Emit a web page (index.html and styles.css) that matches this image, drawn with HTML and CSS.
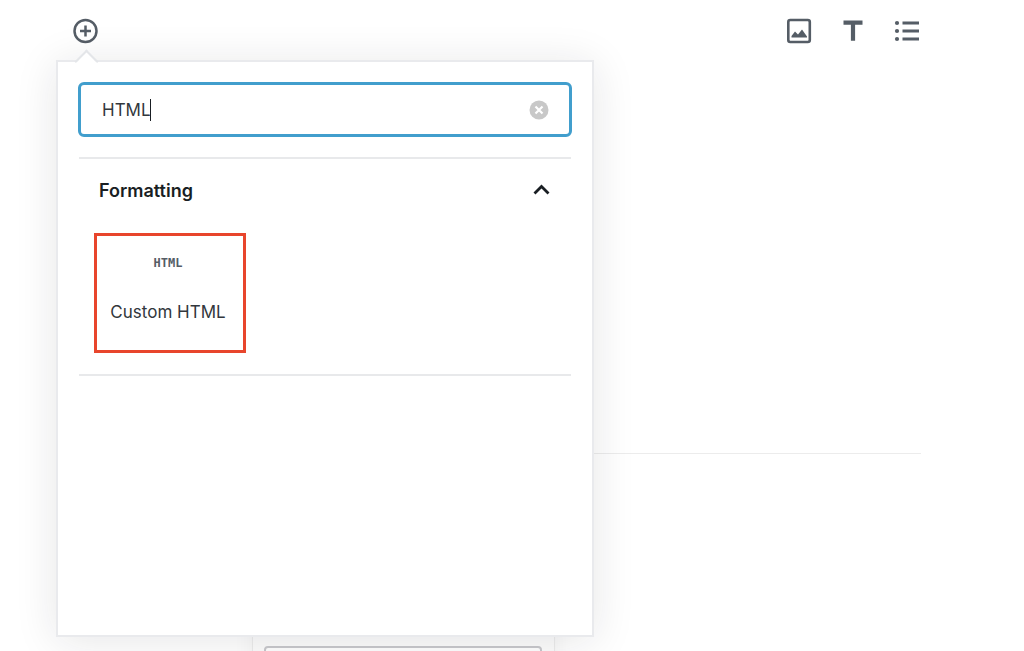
FILE: index.html
```
<!DOCTYPE html>
<html lang="en">
<head>
  <meta charset="UTF-8">
  <title>Add Block</title>
  <link rel="stylesheet" href="styles.css">
</head>
<body>
  <div class="editor">
    <div class="toolbar">
      <div class="inserter">
        <button type="button" class="icon-btn" aria-label="Add block" aria-expanded="true">
          <svg width="26" height="26" viewBox="0 0 26 26" fill="none" stroke="#555d66" stroke-width="2.5">
            <circle cx="13.5" cy="13" r="11"/>
            <path d="M13.5 7.5v11M8 13h11"/>
          </svg>
        </button>

        <div class="popover">
          <div class="search">
            <input type="text" class="search-input" value="HTML" aria-label="Search for a block">
            <span class="caret"></span>
            <button type="button" class="clear" aria-label="Clear search">
              <svg width="20" height="20" viewBox="0 0 20 20">
                <circle cx="10" cy="10" r="9.5" fill="#c8c8c8"/>
                <path d="M6.5 6.5l7 7M13.5 6.5l-7 7" stroke="#fff" stroke-width="2.2"/>
              </svg>
            </button>
          </div>

          <div class="panel">
            <button type="button" class="panel-title" aria-expanded="true">
              Formatting
              <svg width="18" height="12" viewBox="0 0 18 12" fill="none" stroke="#191e23" stroke-width="2.8">
                <path d="M1.5 9.5l7-7 7 7"/>
              </svg>
            </button>
            <ul class="blocks">
              <li>
                <button type="button" class="block">
                  <span class="block-icon">HTML</span>
                  <span class="block-name">Custom HTML</span>
                </button>
              </li>
            </ul>
          </div>
        </div>
      </div>

      <div class="shortcuts">
        <button type="button" class="icon-btn" aria-label="Image">
          <svg width="26" height="26" viewBox="0 0 26 26">
            <rect x="2.3" y="2" width="21.5" height="22" rx="2" fill="none" stroke="#555d66" stroke-width="2.6"/>
            <path d="M5.5 19.5v-1.5l3.5-4.5 3 3 4-5 5 7v1z" fill="#555d66"/>
          </svg>
        </button>
        <button type="button" class="icon-btn" aria-label="Heading">
          <svg width="26" height="26" viewBox="0 0 26 26">
            <path d="M3.5 2.5h19v4.2h-7.4v16h-4.2v-16H3.5z" fill="#555d66"/>
          </svg>
        </button>
        <button type="button" class="icon-btn" aria-label="List">
          <svg width="26" height="26" viewBox="0 0 26 26" fill="#555d66">
            <circle cx="3" cy="5" r="2.1"/>
            <circle cx="3" cy="13" r="2.1"/>
            <circle cx="3" cy="21" r="2.1"/>
            <path d="M8.5 3.6H25v2.8H8.5zM8.5 11.6H25v2.8H8.5zM8.5 19.6H25v2.8H8.5z"/>
          </svg>
        </button>
      </div>
    </div>

    <div class="content"></div>

    <div class="metabox">
      <input type="text" class="metabox-input" aria-label="Value">
    </div>
  </div>
</body>
</html>
```
FILE: styles.css
```
* {
  box-sizing: border-box;
}
body, ul, li {
  list-style: none;
  margin: 0;
  padding: 0;
}
body {
  background-color: #fff;
  font-family: Inter, "Open Sans", sans-serif;
  font-size: 17px;
  color: #32373c;
}
button, input {
  font: inherit;
  color: inherit;
}
button {
  margin: 0;
  padding: 0;
  border: 0;
  background: none;
  cursor: pointer;
}
svg {
  display: block;
}

.editor {
  display: flex;
  flex-direction: column;
  height: 100vh;
  padding: 0 103px 0 56px;
  overflow: hidden;
}

.toolbar {
  display: flex;
  justify-content: space-between;
  height: 62px;
  flex: none;
}
.inserter {
  position: relative;
  display: flex;
  align-items: center;
  padding: 0 16px;
}
.shortcuts {
  display: flex;
  align-items: center;
  gap: 28px;
  padding-right: 1px;
}

.popover {
  position: absolute;
  z-index: 10;
  top: 60px;
  left: 0;
  width: 538px;
  height: 577px;
  padding: 20px;
  border: 2px solid #e9eaed;
  background-color: #fff;
  box-shadow: 0 4px 40px rgba(25, 30, 35, .11);
}
.popover::before {
  content: "";
  position: absolute;
  top: -9px;
  left: 20px;
  width: 15px;
  height: 15px;
  border: 2px solid #e4e6e9;
  border-right: 0;
  border-bottom: 0;
  background: linear-gradient(135deg, #fff 50%, transparent 50%);
  transform: rotate(45deg);
}

.search {
  position: relative;
}
.search-input {
  display: block;
  width: 100%;
  height: 55px;
  padding: 0 60px 0 21px;
  border: 3px solid #419ecd;
  border-radius: 6px;
  outline: none;
  background-color: #fff;
}
.caret {
  position: absolute;
  top: 17px;
  left: 72px;
  width: 1px;
  height: 22px;
  background-color: #191e23;
}
.clear {
  position: absolute;
  top: 18px;
  right: 23px;
}

.panel {
  margin: 20px 1px 0;
  border-top: 2px solid #e8e9eb;
  border-bottom: 2px solid #e8e9eb;
}
.panel-title {
  display: flex;
  justify-content: space-between;
  align-items: center;
  width: 100%;
  height: 62px;
  padding: 0 20px;
  font-size: 18px;
  font-weight: 600;
  color: #191e23;
}
.blocks {
  display: flex;
  padding: 12px 15px 21px;
}
.block {
  display: flex;
  flex-direction: column;
  align-items: center;
  width: 152px;
  height: 120px;
  padding: 15px 4px 0 0;
  border: 3px solid #e8452c;
}
.block-icon {
  margin-bottom: 24px;
  font-family: "DejaVu Sans Mono", monospace;
  font-size: 12px;
  font-weight: 700;
  line-height: 24px;
  color: #555d66;
}
.block-name {
  line-height: 26px;
}

.content {
  height: 392px;
  flex: none;
  border-bottom: 1px solid #ececec;
}

.metabox {
  flex: none;
  width: 303px;
  margin: 160px 0 0 196px;
  padding: 31px 12px 20px 11px;
  border: 1px solid #ececec;
  background-color: #fcfcfc;
  box-shadow: 0 2px 20px rgba(25, 30, 35, .05);
}
.metabox-input {
  display: block;
  width: 100%;
  height: 40px;
  border: 2px solid #c8c8cc;
  border-radius: 4px;
  background-color: #fff;
}
```
